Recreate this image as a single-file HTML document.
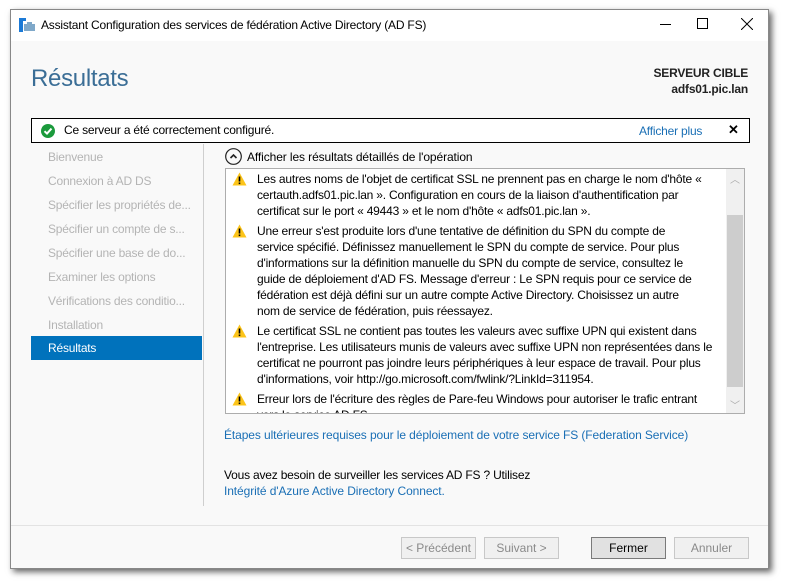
<!DOCTYPE html>
<html><head><meta charset="utf-8"><style>
*{margin:0;padding:0;box-sizing:border-box}
body{width:787px;height:586px;background:#fff;font-family:"Liberation Sans",sans-serif;font-size:12px;color:#000;position:relative;overflow:hidden}
.win{position:absolute;left:10px;top:9px;width:759px;height:560px;background:#f9f9f9;border:1px solid #888;box-shadow:3px 3px 6px rgba(0,0,0,.6)}
.tb{position:absolute;left:0;top:0;width:757px;height:31px;background:#fff}
.abs{position:absolute;white-space:nowrap}
.nav{position:absolute;left:20px;width:171px;height:24px;line-height:24px;padding-left:17px;color:#b4b4b4;font-size:12px;white-space:nowrap;overflow:hidden;letter-spacing:-0.2px}
.box{position:absolute;left:214px;top:158px;width:520px;height:246px;background:#fff;border:1px solid #adadad;overflow:hidden}
.item{position:relative;padding-left:31px;width:497px;line-height:16px;font-size:12px;margin-bottom:4px;letter-spacing:-0.2px;white-space:nowrap}
.item svg{position:absolute;left:6px;top:1px}
.btn{position:absolute;top:537px;height:22px;border:1px solid #c8c8c8;background:#f0f0f0;color:#8a8a8a;text-align:center;line-height:20px;font-size:12px}
a{color:#1a6fb5;text-decoration:none}
</style></head><body>
<div class="win">
<div class="tb">
<svg class="abs" style="left:8px;top:8px" width="16" height="14"><rect x="0" y="0" width="4" height="14" fill="#1c7ad6"/><rect x="4" y="0" width="3" height="3" fill="#1c7ad6"/><rect x="5" y="6" width="11" height="7" fill="#7fa8c9"/><rect x="8" y="4" width="5" height="3" fill="#7fa8c9"/></svg>
<div class="abs" style="left:30px;top:8px;font-size:12px;letter-spacing:-0.2px">Assistant Configuration des services de fédération Active Directory (AD FS)</div>
<div class="abs" style="left:649px;top:14px;width:11px;border-top:1px solid #000"></div>
<div class="abs" style="left:686px;top:8px;width:11px;height:11px;border:1px solid #000"></div>
<svg class="abs" style="left:730px;top:8px" width="12" height="12"><path d="M0 0L12 12M12 0L0 12" stroke="#000" stroke-width="1"/></svg>
</div>
<div class="abs" style="left:20px;top:55px;font-size:24px;color:#3b6e96;letter-spacing:-0.3px">Résultats</div>
<div class="abs" style="right:20px;top:55px;text-align:right;font-size:12px;font-weight:bold;color:#222;line-height:16px;letter-spacing:-0.2px">SERVEUR CIBLE<br>adfs01.pic.lan</div>
<div class="abs" style="left:20px;top:108px;width:719px;height:25px;border:1px solid #000;background:#fff">
<svg class="abs" style="left:9px;top:5px" width="14" height="14"><circle cx="7" cy="7" r="7" fill="#1b9a3c"/><path d="M3.5 7.2L6 9.6L10.5 4.6" stroke="#fff" stroke-width="2" fill="none"/></svg>
<div class="abs" style="left:32px;top:4px;letter-spacing:-0.2px">Ce serveur a été correctement configuré.</div>
<a class="abs" style="left:607px;top:5px;letter-spacing:-0.2px">Afficher plus</a>
<div class="abs" style="left:696px;top:3px;font-weight:bold;font-size:13px">✕</div>
</div>
<div class="nav" style="top:135px">Bienvenue</div>
<div class="nav" style="top:159px">Connexion à AD DS</div>
<div class="nav" style="top:183px">Spécifier les propriétés de...</div>
<div class="nav" style="top:207px">Spécifier un compte de s...</div>
<div class="nav" style="top:231px">Spécifier une base de do...</div>
<div class="nav" style="top:255px">Examiner les options</div>
<div class="nav" style="top:279px">Vérifications des conditio...</div>
<div class="nav" style="top:303px">Installation</div>
<div class="nav" style="top:326px;background:#0072bc;color:#fff">Résultats</div>
<div class="abs" style="left:192px;top:134px;height:362px;border-left:1px solid #cfcfcf"></div>
<svg class="abs" style="left:214px;top:138px" width="17" height="17"><circle cx="8.5" cy="8.5" r="7.8" fill="none" stroke="#222" stroke-width="1.2"/><path d="M5.5 10L8.5 7L11.5 10" stroke="#222" stroke-width="1.6" fill="none"/></svg>
<div class="abs" style="left:236px;top:140px;font-size:12px;letter-spacing:-0.1px">Afficher les résultats détaillés de l'opération</div>
<div class="box">
<div style="position:absolute;left:500px;top:0;width:18px;height:244px;background:#f0f0f0"></div>
<div style="position:absolute;left:501px;top:46px;width:16px;height:172px;background:#cdcdcd"></div>
<div style="position:absolute;left:504px;top:2px;color:#aaa;font-size:10px">︿</div>
<div style="position:absolute;left:504px;top:228px;color:#aaa;font-size:10px">﹀</div>
<div style="padding-top:2px">
<div class="item"><svg width="15" height="14"><path d="M7.5 0.5L14.5 13.5H0.5Z" fill="#fcc419"/><rect x="6.7" y="4.5" width="1.6" height="5" fill="#000"/><rect x="6.7" y="10.5" width="1.6" height="1.6" fill="#000"/></svg>Les autres noms de l'objet de certificat SSL ne prennent pas en charge le nom d'hôte «<br>certauth.adfs01.pic.lan ». Configuration en cours de la liaison d'authentification par<br>certificat sur le port « 49443 » et le nom d'hôte « adfs01.pic.lan ».</div>
<div class="item"><svg width="15" height="14"><path d="M7.5 0.5L14.5 13.5H0.5Z" fill="#fcc419"/><rect x="6.7" y="4.5" width="1.6" height="5" fill="#000"/><rect x="6.7" y="10.5" width="1.6" height="1.6" fill="#000"/></svg>Une erreur s'est produite lors d'une tentative de définition du SPN du compte de<br>service spécifié. Définissez manuellement le SPN du compte de service. Pour plus<br>d'informations sur la définition manuelle du SPN du compte de service, consultez le<br>guide de déploiement d'AD FS. Message d'erreur : Le SPN requis pour ce service de<br>fédération est déjà défini sur un autre compte Active Directory. Choisissez un autre<br>nom de service de fédération, puis réessayez.</div>
<div class="item"><svg width="15" height="14"><path d="M7.5 0.5L14.5 13.5H0.5Z" fill="#fcc419"/><rect x="6.7" y="4.5" width="1.6" height="5" fill="#000"/><rect x="6.7" y="10.5" width="1.6" height="1.6" fill="#000"/></svg>Le certificat SSL ne contient pas toutes les valeurs avec suffixe UPN qui existent dans<br>l'entreprise. Les utilisateurs munis de valeurs avec suffixe UPN non représentées dans le<br>certificat ne pourront pas joindre leurs périphériques à leur espace de travail. Pour plus<br>d'informations, voir http://go.microsoft.com/fwlink/?LinkId=311954.</div>
<div class="item"><svg width="15" height="14"><path d="M7.5 0.5L14.5 13.5H0.5Z" fill="#fcc419"/><rect x="6.7" y="4.5" width="1.6" height="5" fill="#000"/><rect x="6.7" y="10.5" width="1.6" height="1.6" fill="#000"/></svg>Erreur lors de l'écriture des règles de Pare-feu Windows pour autoriser le trafic entrant<br>vers le service AD FS.</div>
</div>
</div>
<a class="abs" style="left:213px;top:418px;letter-spacing:-0.1px">Étapes ultérieures requises pour le déploiement de votre service FS (Federation Service)</a>
<div class="abs" style="left:213px;top:458px;letter-spacing:-0.2px">Vous avez besoin de surveiller les services AD FS ? Utilisez</div>
<a class="abs" style="left:213px;top:474px;letter-spacing:-0.1px">Intégrité d'Azure Active Directory Connect.</a>
<div class="abs" style="left:0;top:515px;width:757px;border-top:1px solid #e3e3e3"></div>
</div>
<div class="btn" style="left:401px;width:75px">&lt; Précédent</div>
<div class="btn" style="left:484px;width:75px">Suivant &gt;</div>
<div class="btn" style="left:591px;width:75px;border-color:#7a7a7a;background:#e1e1e1;color:#000">Fermer</div>
<div class="btn" style="left:674px;width:75px">Annuler</div>
</body></html>
